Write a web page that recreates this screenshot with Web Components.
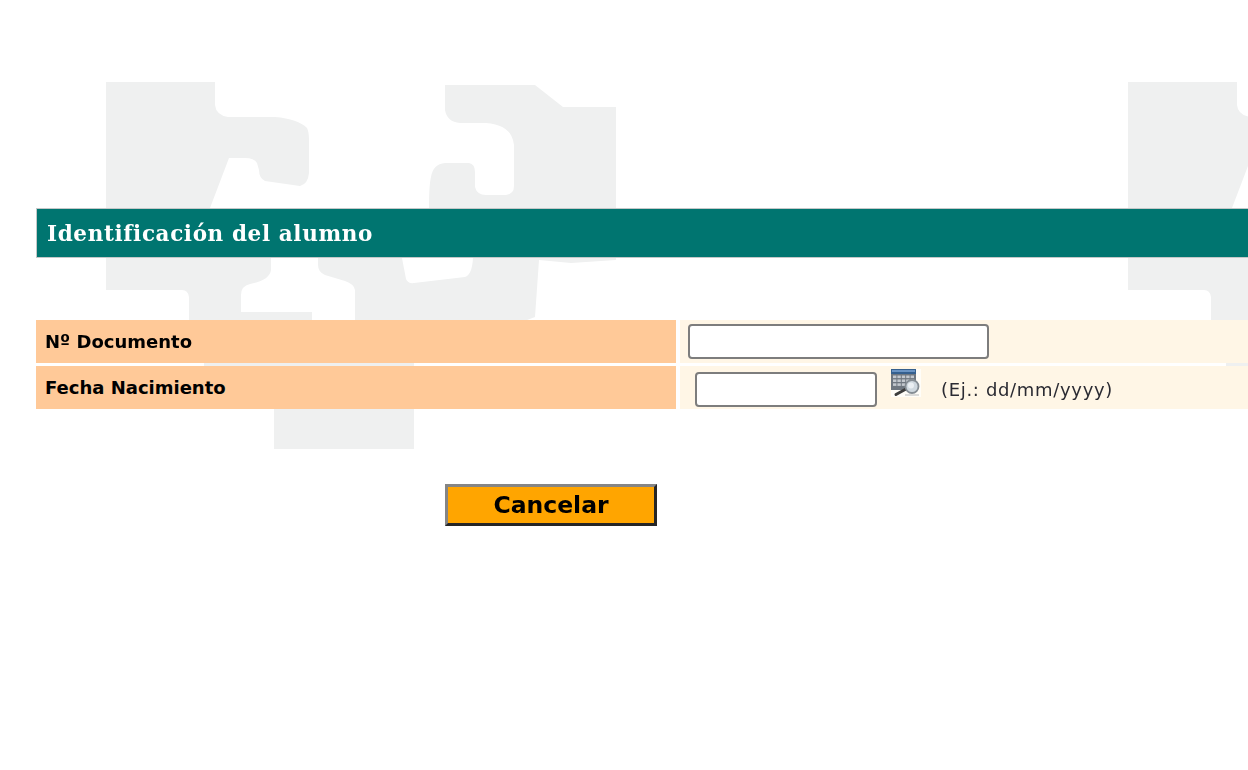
<!DOCTYPE html>
<html lang="es">
<head>
<meta charset="utf-8">
<title>Identificación del alumno</title>
<style>
  html, body { margin: 0; height: 100%; overflow: hidden; background: #fff; }
  body { font-family: "DejaVu Sans", Verdana, sans-serif; }
</style>
</head>
<body>
<fp-page>
  <fp-title>Identificación del alumno</fp-title>
  <fp-form>
    <fp-row label="Nº Documento"><fp-input size="doc"></fp-input></fp-row>
    <fp-row label="Fecha Nacimiento"><fp-date></fp-date></fp-row>
  </fp-form>
  <fp-button>Cancelar</fp-button>
</fp-page>

<script>
const pageTpl = document.createElement('template')
pageTpl.innerHTML = `
  <style>
    :host {
      display: block;
      position: relative;
      height: 770px;
      box-sizing: border-box;
      padding: 208px 0 0 36px;
      overflow: hidden;
    }
    .mark { position: absolute; left: 0; top: 0; filter: blur(.5px); }
    /* the reference is a soft, upscaled capture */
    .content { position: relative; margin-right: -4px; filter: blur(.4px); }
  </style>
  <svg class="mark" width="1248" height="770" viewBox="0 0 1248 770" aria-hidden="true">
    <defs>
      <path id="tile" fill-rule="evenodd" d="M106 82H215V105Q216 115 228 117H275Q298 119 307 128Q309 132 309 140V173Q308 184 300 186L265 181Q259 178 259 170L257 163Q254 158 245 158H229L210 208V258H271V270Q270 280 250 284Q241 286 241 295V312H312V320H355V290Q354 284 345 281L325 275Q318 272 318 265V258H402L406 279Q408 284 414 283L465 277Q472 275 473 258H429V208Q429 185 431 177Q433 164 445 163H469Q475 164 475 172V187Q477 195 486 195H506Q514 194 514 186V145Q512 125 486 123H460Q447 122 445 110V85H535L563 107H616V260L571 263L539 260L535 317L414 363V449H274V372L204 370V358L189 355V297Q188 290 182 290H106Z"/>
    </defs>
    <use href="#tile" fill="#eff0f0"/>
    <use href="#tile" x="1022" fill="#eff0f0"/>
  </svg>
  <div class="content"><slot></slot></div>
`
class FpPage extends HTMLElement {
  constructor() {
    super()
    this.attachShadow({ mode: 'open' }).append(pageTpl.content.cloneNode(true))
  }
}

const titleTpl = document.createElement('template')
titleTpl.innerHTML = `
  <style>
    :host {
      display: flex;
      align-items: center;
      height: 50px;
      box-sizing: border-box;
      padding-left: 10px;
      background: #007570;
      border: 1px solid #c4c8c8;
      border-right: 0;
      color: #fff;
      font: bold 21.5px "DejaVu Serif", "DejaVu Sans", serif;
      letter-spacing: .62px;
    }
  </style>
  <slot></slot>
`
class FpTitle extends HTMLElement {
  constructor() {
    super()
    this.attachShadow({ mode: 'open' }).append(titleTpl.content.cloneNode(true))
  }
}

const formTpl = document.createElement('template')
formTpl.innerHTML = `
  <style>
    :host { display: grid; row-gap: 3px; margin-top: 62px; }
  </style>
  <slot></slot>
`
class FpForm extends HTMLElement {
  constructor() {
    super()
    this.attachShadow({ mode: 'open' }).append(formTpl.content.cloneNode(true))
  }
}

const rowTpl = document.createElement('template')
rowTpl.innerHTML = `
  <style>
    :host {
      display: grid;
      grid-template-columns: 640px 1fr;
      column-gap: 4px;
      height: 43px;
    }
    .label {
      display: flex;
      align-items: center;
      padding-left: 9px;
      background: #ffc998;
      color: #000;
      font: bold 18px "DejaVu Sans", Verdana, sans-serif;
    }
    .value {
      display: flex;
      align-items: center;
      background: #fff6e6;
      padding-left: 8px;
    }
  </style>
  <div class="label"><span></span></div>
  <div class="value"><slot></slot></div>
`
class FpRow extends HTMLElement {
  constructor() {
    super()
    this.attachShadow({ mode: 'open' }).append(rowTpl.content.cloneNode(true))
    this.shadowRoot.querySelector('.label span').textContent = this.getAttribute('label')
  }
}

const inputTpl = document.createElement('template')
inputTpl.innerHTML = `
  <style>
    :host { display: block; }
    input {
      display: block;
      box-sizing: border-box;
      width: var(--input-width, 301px);
      height: 35px;
      margin: 0;
      padding: 0 4px;
      background: #fff;
      border: 2px solid #7d7d7d;
      border-radius: 4px;
      outline: 0;
    }
  </style>
  <input type="text">
`
class FpInput extends HTMLElement {
  constructor() {
    super()
    this.attachShadow({ mode: 'open' }).append(inputTpl.content.cloneNode(true))
  }
}

const dateTpl = document.createElement('template')
dateTpl.innerHTML = `
  <style>
    :host {
      display: flex;
      align-items: center;
      padding-left: 7px;
      color: #2b2b33;
      font: 18px "DejaVu Sans", Verdana, sans-serif;
      letter-spacing: .67px;
    }
    fp-input { --input-width: 182px; margin-top: 3px; }
    svg { display: block; margin: -9px 0 0 14px; }
    span { margin: 4px 0 0 20px; }
  </style>
  <fp-input></fp-input>
  <svg width="30" height="28" viewBox="0 0 30 28" aria-hidden="true">
    <rect width="30" height="28" fill="#fffdf8"/>
    <rect x="0" y="0" width="25" height="21" fill="#6f7780"/>
    <rect x="0" y="0" width="25" height="5" fill="#35608f"/>
    <rect x="1" y="1" width="23" height="2" fill="#6a94c4"/>
    <g fill="#c3c8ce">
      <rect x="2" y="6.5" width="3.4" height="2.6"/><rect x="6.4" y="6.5" width="3.4" height="2.6"/><rect x="10.8" y="6.5" width="3.4" height="2.6"/><rect x="15.2" y="6.5" width="3.4" height="2.6"/><rect x="19.6" y="6.5" width="3.4" height="2.6"/>
      <rect x="2" y="10.4" width="3.4" height="2.6"/><rect x="6.4" y="10.4" width="3.4" height="2.6"/><rect x="10.8" y="10.4" width="3.4" height="2.6"/><rect x="15.2" y="10.4" width="3.4" height="2.6"/><rect x="19.6" y="10.4" width="3.4" height="2.6"/>
      <rect x="2" y="14.3" width="3.4" height="2.6"/><rect x="6.4" y="14.3" width="3.4" height="2.6"/><rect x="10.8" y="14.3" width="3.4" height="2.6"/>
    </g>
    <path d="M5 25.5 15 20" stroke="#3d3d3d" stroke-width="3" stroke-linecap="round"/>
    <circle cx="21" cy="17.5" r="6.5" fill="#cfd8df" stroke="#858d94" stroke-width="1.8"/>
    <circle cx="20" cy="16.5" r="3" fill="#eaeff3"/>
    <path d="M14 26H28" stroke="#cfcfcf" stroke-width="1.5"/>
  </svg>
  <span>(Ej.: dd/mm/yyyy)</span>
`
class FpDate extends HTMLElement {
  constructor() {
    super()
    this.attachShadow({ mode: 'open' }).append(dateTpl.content.cloneNode(true))
  }
}

const buttonTpl = document.createElement('template')
buttonTpl.innerHTML = `
  <style>
    :host { display: block; margin: 75px 0 0 409px; width: 212px; }
    button {
      display: block;
      width: 100%;
      height: 42px;
      box-sizing: border-box;
      padding: 0;
      background: #ffa500;
      border: 3px solid;
      border-color: #858585 #262626 #262626 #858585;
      color: #000;
      font: bold 23.5px "DejaVu Sans", Verdana, sans-serif;
    }
  </style>
  <button type="button"><slot></slot></button>
`
class FpButton extends HTMLElement {
  constructor() {
    super()
    this.attachShadow({ mode: 'open' }).append(buttonTpl.content.cloneNode(true))
  }
}

customElements.define('fp-input', FpInput)
customElements.define('fp-date', FpDate)
customElements.define('fp-row', FpRow)
customElements.define('fp-form', FpForm)
customElements.define('fp-title', FpTitle)
customElements.define('fp-button', FpButton)
customElements.define('fp-page', FpPage)
</script>
</body>
</html>
